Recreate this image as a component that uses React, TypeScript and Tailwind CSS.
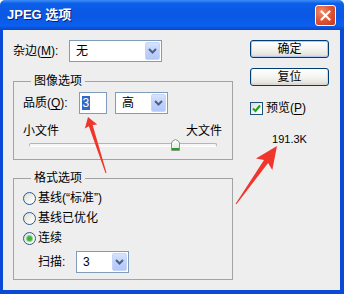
import React from "react";

function Chevron() {
  return (
    <svg width="9" height="6" viewBox="0 0 9 6">
      <path d="M1 1 L4.5 4.5 L8 1" fill="none" stroke="#4d6185" strokeWidth="2" />
    </svg>
  );
}

function ComboButton() {
  return (
    <div className="w-[15px] h-[18px] rounded-[2px] border border-[#c6d6fb] bg-[linear-gradient(180deg,#d6e3fd_0%,#c0d2fb_50%,#b3c8f7_100%)] flex items-center justify-center">
      <Chevron />
    </div>
  );
}

function Radio({ checked }: { checked?: boolean }) {
  return (
    <div className="w-[13px] h-[13px] rounded-full border border-[#2d5a8c] bg-[linear-gradient(135deg,#dcdcd6_0%,#f4f4f2_60%,#ffffff_100%)] flex items-center justify-center">
      {checked && <div className="w-[5px] h-[5px] rounded-full bg-[#3fb33f] shadow-[0_0_0_1px_#8fd68f]" />}
    </div>
  );
}

function XPButton({ label, def }: { label: string; def?: boolean }) {
  return (
    <div
      className={
        "h-[18px] w-[79px] rounded-[3px] border border-[#003c74] bg-[linear-gradient(180deg,#ffffff_0%,#f4f4f1_50%,#e6e5de_85%,#d6d0c5_100%)] flex items-center justify-center leading-[14px] " +
        (def ? "shadow-[inset_0_0_0_1px_#b0c8f2]" : "shadow-[inset_0_-1px_0_1px_#dcdad2]")
      }
    >
      {label}
    </div>
  );
}

export default function App() {
  return (
    <div className="w-[344px] h-[294px] relative flex flex-col font-['Liberation_Sans','Noto_Sans_CJK_SC',sans-serif] text-[12px] text-black select-none">
      {/* Title bar */}
      <div className="h-[30px] shrink-0 flex items-center justify-between rounded-t-[5px] bg-[linear-gradient(180deg,#3d8ef7_0%,#0c5ee8_12%,#0a57e4_50%,#0b60ee_85%,#0946cc_100%)]">
        <span className="pl-[7px] text-white font-bold text-[13px] leading-[16px] [text-shadow:1px_1px_0_#0a1b7a]">
          JPEG 选项
        </span>
        <div className="mr-[8px] w-[21px] h-[21px] rounded-[3px] border border-white bg-[radial-gradient(circle_at_30%_30%,#f0906e_0%,#e0573a_45%,#c2381a_100%)] flex items-center justify-center">
          <svg width="11" height="11" viewBox="0 0 11 11">
            <path d="M1.5 1.5 L9.5 9.5 M9.5 1.5 L1.5 9.5" stroke="white" strokeWidth="2.2" strokeLinecap="round" />
          </svg>
        </div>
      </div>

      {/* Body */}
      <div className="flex-1 flex border-l-[3px] border-r-[4px] border-b-[4px] border-[#0b4ad6] bg-[#eeeeee]">
        {/* Left column */}
        <div className="w-[230px] pl-[10px] pt-[10px] flex flex-col">
          <div className="flex items-center h-[22px]">
            <span className="w-[56px] leading-[14px]">
              杂边(<span className="underline underline-offset-2">M</span>):
            </span>
            <div className="w-[93px] h-[22px] border border-[#7f9db9] bg-white flex items-center justify-between pl-[6px] pr-[1px]">
              <span className="leading-[14px]">无</span>
              <ComboButton />
            </div>
          </div>

          <fieldset className="mt-[12px] border border-[#a3a3a3] p-0 m-0 min-w-0">
            <legend className="ml-[17px] px-[3px] leading-[14px]">图像选项</legend>
            <div className="pl-[9px] pr-[10px] pt-[4px] pb-[7px]">
              <div className="flex items-center h-[22px]">
                <span className="w-[56px] leading-[14px]">
                  品质(<span className="underline underline-offset-2">Q</span>):
                </span>
                <div className="w-[28px] h-[22px] border border-[#7f9db9] bg-white flex items-center pl-[2px]">
                  <span className="bg-[#316ac5] text-white leading-[14px] px-[0.5px]">3</span>
                </div>
                <div className="ml-[8px] w-[53px] h-[22px] border border-[#7f9db9] bg-white flex items-center justify-between pl-[6px] pr-[1px]">
                  <span className="leading-[14px]">高</span>
                  <ComboButton />
                </div>
              </div>
              <div className="mt-[10px] flex justify-between leading-[14px]">
                <span>小文件</span>
                <span>大文件</span>
              </div>
              <div className="h-[14px] ml-[6px] mr-[5px] relative flex items-center">
                <div className="w-full h-[4px] rounded-full border border-[#b5b5b5] border-b-white bg-[#f6f6f6]" />
                <svg className="absolute left-[142px] top-[1px]" width="9" height="12" viewBox="0 0 9 12">
                  <defs>
                    <linearGradient id="th" x1="0" y1="0" x2="0" y2="1">
                      <stop offset="0" stopColor="#ffffff" />
                      <stop offset="1" stopColor="#e4e4de" />
                    </linearGradient>
                  </defs>
                  <path d="M0.5 4 Q0.5 2 4.5 0.5 Q8.5 2 8.5 4 L8.5 11.5 L0.5 11.5 Z" fill="url(#th)" stroke="#8c9397" />
                  <rect x="1" y="9" width="7" height="2" fill="#21a121" />
                </svg>
              </div>
            </div>
          </fieldset>

          <fieldset className="mt-[11px] border border-[#a3a3a3] p-0 m-0 min-w-0">
            <legend className="ml-[17px] px-[3px] leading-[14px]">格式选项</legend>
            <div className="pl-[9px] pt-[3px] pb-[6px]">
              <div className="h-[20px] flex items-center gap-[2px]">
                <Radio />
                <span className="leading-[14px]">基线(“标准”)</span>
              </div>
              <div className="h-[20px] flex items-center gap-[2px]">
                <Radio />
                <span className="leading-[14px]">基线已优化</span>
              </div>
              <div className="h-[20px] flex items-center gap-[2px]">
                <Radio checked />
                <span className="leading-[14px]">连续</span>
              </div>
              <div className="mt-[3px] pl-[15px] flex items-center h-[22px]">
                <span className="w-[38px] leading-[14px]">扫描:</span>
                <div className="w-[53px] h-[22px] border border-[#7f9db9] bg-white flex items-center justify-between pl-[6px] pr-[1px]">
                  <span className="leading-[14px]">3</span>
                  <ComboButton />
                </div>
              </div>
            </div>
          </fieldset>
        </div>

        {/* Right column */}
        <div className="ml-[17px] pt-[10px] w-[79px] flex flex-col">
          <XPButton label="确定" def />
          <div className="mt-[10px]">
            <XPButton label="复位" />
          </div>
          <div className="mt-[15px] h-[14px] flex items-center gap-[3px]">
            <div className="w-[13px] h-[13px] border border-[#1c5180] bg-[linear-gradient(135deg,#dcdcd6_0%,#f4f4f2_60%,#ffffff_100%)] flex items-center justify-center">
              <svg width="9" height="9" viewBox="0 0 9 9">
                <path d="M1 4.5 L3.5 7 L8 1.5" fill="none" stroke="#21a121" strokeWidth="2" />
              </svg>
            </div>
            <span className="leading-[14px]">
              预览(<span className="underline underline-offset-2">P</span>)
            </span>
          </div>
          <div className="mt-[18px] text-center text-[11px] leading-[13px]">191.3K</div>
        </div>
      </div>

      {/* Red annotation arrows */}
      <svg className="absolute inset-0 pointer-events-none" width="344" height="294" viewBox="0 0 344 294">
        <polygon
          points="88,117 97.25,124.53 92.65,124.96 106.48,172.85 105.52,173.15 88.85,126.18 84.87,128.51"
          fill="#f0362c"
        />
        <polygon
          points="277,146 272.3,169.97 268.08,162.94 236.44,204.23 235.62,203.65 264,160.06 255.97,158.43"
          fill="#f0362c"
        />
      </svg>
    </div>
  );
}
